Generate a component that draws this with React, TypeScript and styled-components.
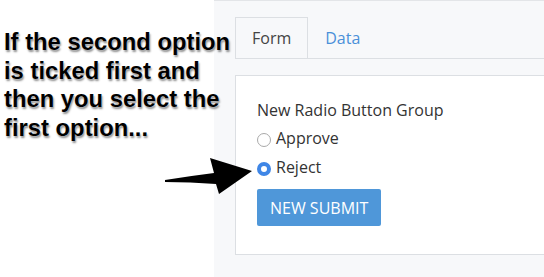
import React, { useState } from "react";
import styled, { createGlobalStyle } from "styled-components";

const GlobalStyle = createGlobalStyle`
  html, body {
    margin: 0;
    padding: 0;
    background: #fff;
  }
  body {
    font-family: "Open Sans", "Liberation Sans", sans-serif;
  }
`;

const Page = styled.div`
  display: flex;
  width: 544px;
  height: 277px;
  overflow: hidden;
  position: relative;
`;

const Caption = styled.div`
  width: 214px;
  flex-shrink: 0;
  padding: 28px 0 0 4px;
  box-sizing: border-box;
  font-family: "Liberation Sans", Arial, sans-serif;
  font-weight: bold;
  font-size: 23.8px;
  line-height: 28.7px;
  color: #000;
  white-space: nowrap;
  text-shadow: 0 0 1px #fff, 1px 2px 2px rgba(0, 0, 0, 0.45);
  position: relative;
  z-index: 2;
`;

const Panel = styled.div`
  flex: 1;
  background: #f7f8fa;
  border-top: 1px solid #e3e5e8;
  padding: 16px 0 0 21px;
  box-sizing: border-box;
  overflow: hidden;
`;

const Tabs = styled.div`
  display: flex;
  border-bottom: 1px solid #dcdfe3;
  height: 41px;
`;

const Tab = styled.div<{ $active?: boolean }>`
  padding: 0 16px;
  display: flex;
  align-items: center;
  font-size: 16px;
  color: ${(p) => (p.$active ? "#444" : "#4a90d9")};
  border: 1px solid ${(p) => (p.$active ? "#dcdfe3" : "transparent")};
  border-bottom: none;
  background: #f7f8fa;
  margin-bottom: -1px;
  height: 41px;
  box-sizing: border-box;
`;

const Card = styled.div`
  margin-top: 16px;
  margin-right: -4px;
  background: #fff;
  border: 1px solid #dcdfe3;
  height: 180px;
  box-sizing: border-box;
  padding: 23px 21px;
  color: #333;
`;

const GroupLabel = styled.div`
  font-size: 16px;
  line-height: 22px;
  margin-bottom: 3px;
`;

const Option = styled.label`
  display: flex;
  align-items: center;
  gap: 5px;
  font-size: 16px;
  line-height: 29px;
  height: 29px;
  cursor: pointer;
`;

const Radio = styled.span<{ $checked?: boolean }>`
  width: 14px;
  height: 14px;
  border-radius: 50%;
  box-sizing: border-box;
  border: ${(p) => (p.$checked ? "4px solid #3f86e6" : "1px solid #a9a9a9")};
  background: #fff;
  margin-top: 2px;
`;

const Button = styled.button`
  margin-top: 7px;
  background: #4f97d9;
  color: #fff;
  border: none;
  border-radius: 2px;
  height: 37px;
  padding: 0 13px;
  font-family: "Open Sans", "Liberation Sans", sans-serif;
  font-size: 16px;
  cursor: pointer;
`;

const Arrow = styled.svg`
  position: absolute;
  left: 0;
  top: 0;
  pointer-events: none;
  z-index: 3;
`;

export default function App() {
  const [value, setValue] = useState("reject");
  return (
    <>
      <GlobalStyle />
      <Page>
        <Caption>
          If the second option
          <br />
          is ticked first and
          <br />
          then you select the
          <br />
          first option...
        </Caption>
        <Panel>
          <Tabs>
            <Tab $active>Form</Tab>
            <Tab>Data</Tab>
          </Tabs>
          <Card>
            <GroupLabel>New Radio Button Group</GroupLabel>
            <Option onClick={() => setValue("approve")}>
              <Radio $checked={value === "approve"} />
              Approve
            </Option>
            <Option onClick={() => setValue("reject")}>
              <Radio $checked={value === "reject"} />
              Reject
            </Option>
            <Button>NEW SUBMIT</Button>
          </Card>
        </Panel>
        <Arrow width="544" height="277" viewBox="0 0 544 277">
          <path
            d="M165 180 Q190 176 214 173 L210 158 L252 171 L219 194 L216 184 Q190 182 165 182 Z"
            fill="#000"
          />
        </Arrow>
      </Page>
    </>
  );
}
